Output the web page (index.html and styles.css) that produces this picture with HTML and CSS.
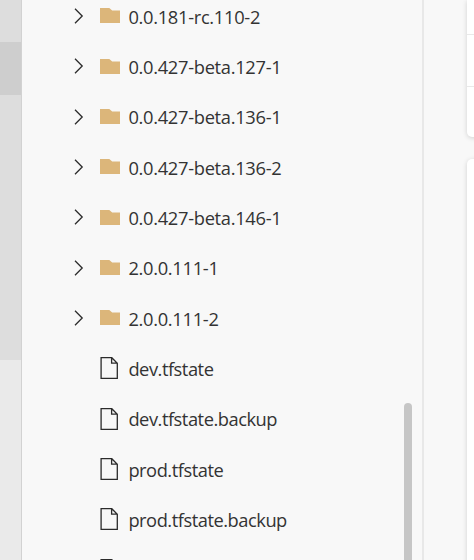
FILE: index.html
```html
<!DOCTYPE html>
<html lang="en">
<head>
<meta charset="utf-8">
<title>Files</title>
<link rel="stylesheet" href="styles.css">
</head>
<body>
<svg class="defs" width="0" height="0">
  <symbol id="chevron" viewBox="0 0 10 16"><path d="M1 .8 8.2 8 1 15.2" fill="none" stroke="#2b2b2b" stroke-width="1.3"/></symbol>
  <symbol id="folder" viewBox="0 0 20 15"><path d="M0 0H9.3L12.2 2.4H20V15H0Z" fill="#dcb67a"/></symbol>
  <symbol id="file" viewBox="0 0 18 22"><path d="M1.1.7H11.8L17.3 6.2V21.3H1.1ZM11.6.8V6.2H17.2" fill="none" stroke="#2b2b2b" stroke-width="1.3"/></symbol>
</svg>
<div class="app">
  <div class="rail"><div class="rail-group"><div class="rail-item"></div></div></div>
  <div class="tree">
    <ul class="list">
      <li class="row"><svg class="chevron"><use href="#chevron"/></svg><svg class="folder"><use href="#folder"/></svg><span class="name">0.0.181-rc.110-2</span></li>
      <li class="row"><svg class="chevron"><use href="#chevron"/></svg><svg class="folder"><use href="#folder"/></svg><span class="name">0.0.427-beta.127-1</span></li>
      <li class="row"><svg class="chevron"><use href="#chevron"/></svg><svg class="folder"><use href="#folder"/></svg><span class="name">0.0.427-beta.136-1</span></li>
      <li class="row"><svg class="chevron"><use href="#chevron"/></svg><svg class="folder"><use href="#folder"/></svg><span class="name">0.0.427-beta.136-2</span></li>
      <li class="row"><svg class="chevron"><use href="#chevron"/></svg><svg class="folder"><use href="#folder"/></svg><span class="name">0.0.427-beta.146-1</span></li>
      <li class="row"><svg class="chevron"><use href="#chevron"/></svg><svg class="folder"><use href="#folder"/></svg><span class="name">2.0.0.111-1</span></li>
      <li class="row"><svg class="chevron"><use href="#chevron"/></svg><svg class="folder"><use href="#folder"/></svg><span class="name">2.0.0.111-2</span></li>
      <li class="row leaf"><svg class="file"><use href="#file"/></svg><span class="name">dev.tfstate</span></li>
      <li class="row leaf"><svg class="file"><use href="#file"/></svg><span class="name">dev.tfstate.backup</span></li>
      <li class="row leaf"><svg class="file"><use href="#file"/></svg><span class="name">prod.tfstate</span></li>
      <li class="row leaf"><svg class="file"><use href="#file"/></svg><span class="name">prod.tfstate.backup</span></li>
      <li class="row leaf"><svg class="file"><use href="#file"/></svg></li>
    </ul>
    <div class="thumb"></div>
  </div>
  <div class="content">
    <div class="card card-top"><div class="line"></div><div class="line"></div></div>
    <div class="card card-main"></div>
  </div>
</div>
</body>
</html>
```
FILE: styles.css
```css
* { box-sizing: border-box; }
body {
  margin: 0;
  background: #f8f8f8;
  color: #333;
  font-family: "Open Sans", "Noto Sans", sans-serif;
}
.defs { position: absolute; }
.app { display: flex; width: 474px; height: 560px; overflow: hidden; }
.rail { width: 22px; flex: none; background: #eaeaea; border-right: 1px solid #d2d2d2; }
.rail-group { height: 360px; padding-top: 42px; background: #dddddd; }
.rail-item { height: 53px; background: #cecece; }
.tree {
  position: relative;
  width: 402px;
  flex: none;
  overflow: hidden;
  border-right: 2px solid #e8e8e8;
}
.list { list-style: none; margin: -9.4px 0 0; padding: 0; }
.row { display: flex; align-items: center; height: 50.36px; padding-left: 52px; }
.leaf { padding-left: 78px; }
.chevron { width: 10px; height: 16px; flex: none; margin-right: 16px; }
.folder { width: 20px; height: 15px; flex: none; margin-right: 8.4px; }
.file { width: 18px; height: 22px; flex: none; margin-right: 10.4px; }
.name { font-size: 18.3px; letter-spacing: -0.3px; line-height: 26px; padding-top: 1.6px; white-space: nowrap; }
.leaf .name { letter-spacing: -0.47px; }
.thumb {
  position: absolute;
  left: 382px;
  top: 403px;
  width: 8px;
  height: 170px;
  border-radius: 4px;
  background: #c6c6c6;
}
.content { flex: 1; padding-left: 43px; }
.card { background: #fff; box-shadow: 0 1px 5px rgba(0, 0, 0, .16); width: 60px; }
.card-top { height: 137px; padding-top: 34px; border-radius: 0 0 0 5px; }
.line { height: 52px; border-top: 1px solid #e9e9e9; }
.card-main { margin-top: 22px; height: 420px; border-radius: 5px 0 0 0; }
```
